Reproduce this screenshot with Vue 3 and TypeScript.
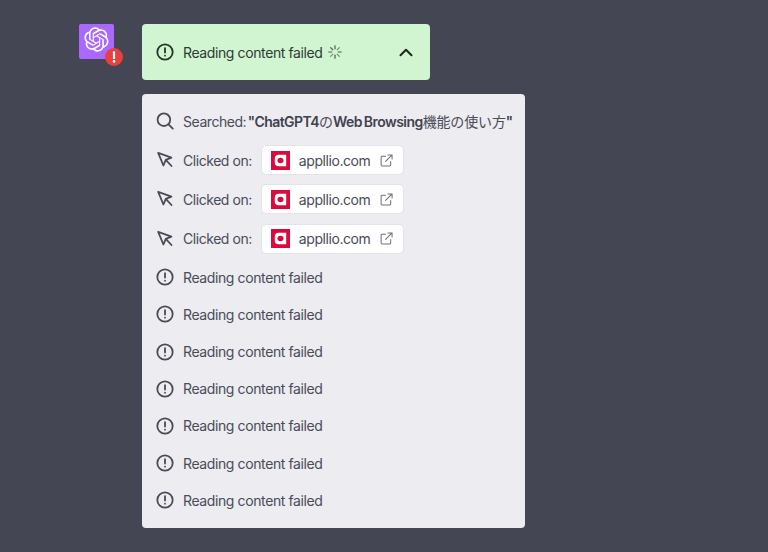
<script setup lang="ts">
const rowsFailed: number[] = [1, 2, 3, 4, 5, 6, 7]
const clicks: number[] = [1, 2, 3]
const spokes: number[] = [0, 45, 90, 135, 180, 225, 270, 315]
</script>

<template>
  <div class="page">
    <div class="avatar">
      <svg class="logo" viewBox="0 0 41 41" fill="#fff"><path d="M37.5324 16.8707C37.9808 15.5241 38.1363 14.0974 37.9886 12.6859C37.8409 11.2744 37.3934 9.91076 36.676 8.68622C35.6126 6.83404 33.9882 5.3676 32.0373 4.4985C30.0864 3.62941 27.9098 3.40259 25.8215 3.85078C24.8796 2.7893 23.7219 1.94125 22.4257 1.36341C21.1295 0.785575 19.7249 0.491269 18.3058 0.500197C16.1708 0.495044 14.0893 1.16803 12.3614 2.42214C10.6335 3.67624 9.34853 5.44666 8.6917 7.47815C7.30085 7.76286 5.98686 8.3414 4.8377 9.17505C3.68854 10.0087 2.73073 11.0782 2.02839 12.312C0.956464 14.1591 0.498905 16.2988 0.721698 18.4228C0.944492 20.5467 1.83612 22.5449 3.268 24.1293C2.81966 25.4759 2.66413 26.9026 2.81182 28.3141C2.95951 29.7256 3.40701 31.0892 4.12437 32.3138C5.18791 34.1659 6.8123 35.6322 8.76321 36.5013C10.7141 37.3704 12.8907 37.5973 14.9789 37.1492C15.9208 38.2107 17.0786 39.0587 18.3747 39.6366C19.6709 40.2144 21.0755 40.5087 22.4946 40.4998C24.6307 40.5054 26.7133 39.8321 28.4418 38.5772C30.1704 37.3223 31.4556 35.5506 32.1119 33.5179C33.5027 33.2332 34.8167 32.6547 35.9659 31.821C37.115 30.9874 38.0728 29.9178 38.7752 28.684C39.8458 26.8371 40.3023 24.6979 40.0789 22.5748C39.8556 20.4517 38.9639 18.4544 37.5324 16.8707ZM22.4978 37.8849C20.7443 37.8874 19.0459 37.2733 17.6994 36.1501C17.7601 36.117 17.8666 36.0586 17.936 36.0161L25.9004 31.4156C26.1003 31.3019 26.2663 31.137 26.3813 30.9378C26.4964 30.7386 26.5563 30.5124 26.5549 30.2825V19.0542L29.9213 20.998C29.9389 21.0068 29.9541 21.0198 29.9656 21.0359C29.977 21.052 29.9842 21.0707 29.9867 21.0902V30.3889C29.9842 32.375 29.1946 34.2791 27.7909 35.6841C26.3872 37.0892 24.4838 37.8806 22.4978 37.8849ZM6.39227 31.0064C5.51397 29.4888 5.19742 27.7107 5.49804 25.9832C5.55718 26.0187 5.66048 26.0818 5.73461 26.1244L13.699 30.7248C13.8975 30.8408 14.1233 30.902 14.3532 30.902C14.583 30.902 14.8088 30.8408 15.0073 30.7248L24.731 25.1103V28.9979C24.7321 29.0177 24.7283 29.0376 24.7199 29.0556C24.7115 29.0736 24.6988 29.0893 24.6829 29.1012L16.6317 33.7497C14.9096 34.7416 12.8643 35.0097 10.9447 34.4954C9.02506 33.9811 7.38785 32.7263 6.39227 31.0064ZM4.29707 13.6194C5.17156 12.0998 6.55279 10.9364 8.19885 10.3327C8.19885 10.4013 8.19491 10.5228 8.19491 10.6071V19.808C8.19351 20.0378 8.25334 20.2638 8.36823 20.4629C8.48312 20.6619 8.64893 20.8267 8.84863 20.9404L18.5723 26.5542L15.206 28.4979C15.1894 28.5089 15.1703 28.5155 15.1505 28.5173C15.1307 28.5191 15.1107 28.516 15.0924 28.5082L7.04046 23.8557C5.32135 22.8601 4.06716 21.2235 3.55289 19.3046C3.03862 17.3858 3.30624 15.3413 4.29707 13.6194ZM31.955 20.0556L22.2312 14.4411L25.5976 12.4981C25.6142 12.4872 25.6333 12.4805 25.6531 12.4787C25.6729 12.4769 25.6928 12.4801 25.7111 12.4879L33.7631 17.1364C34.9967 17.849 36.0017 18.8982 36.6606 20.1613C37.3194 21.4244 37.6047 22.849 37.4832 24.2684C37.3617 25.6878 36.8382 27.0432 35.9743 28.1759C35.1103 29.3086 33.9415 30.1717 32.6047 30.6641C32.6047 30.5947 32.6047 30.4733 32.6047 30.3889V21.188C32.6066 20.9586 32.5474 20.7328 32.4332 20.5338C32.319 20.3348 32.154 20.1698 31.955 20.0556ZM35.3055 15.0128C35.2464 14.9765 35.1431 14.9142 35.069 14.8717L27.1045 10.2712C26.906 10.1554 26.6803 10.0943 26.4504 10.0943C26.2206 10.0943 25.9948 10.1554 25.7963 10.2712L16.0726 15.8858V11.9982C16.0715 11.9783 16.0753 11.9585 16.0837 11.9405C16.0921 11.9225 16.1048 11.9068 16.1207 11.8949L24.1719 7.25025C25.4053 6.53903 26.8158 6.19376 28.2383 6.25482C29.6608 6.31589 31.0364 6.78077 32.2044 7.59508C33.3723 8.40939 34.2842 9.53945 34.8334 10.8531C35.3826 12.1667 35.5464 13.6095 35.3055 15.0128ZM14.2424 21.9419L10.8752 19.9981C10.8576 19.9893 10.8423 19.9763 10.8309 19.9602C10.8195 19.9441 10.8122 19.9254 10.8098 19.9058V10.6071C10.8107 9.18295 11.2173 7.78848 11.9819 6.58696C12.7466 5.38544 13.8377 4.42659 15.1275 3.82264C16.4173 3.21869 17.8524 2.99464 19.2649 3.1767C20.6775 3.35876 22.0089 3.93941 23.1034 4.85067C23.0427 4.88379 22.937 4.94215 22.8668 4.98473L14.9024 9.58517C14.7025 9.69878 14.5366 9.86356 14.4215 10.0626C14.3065 10.2616 14.2466 10.4877 14.2479 10.7175L14.2424 21.9419ZM16.071 17.9991L20.4018 15.4978L24.7325 17.9975V22.9985L20.4018 25.4983L16.071 22.9985V17.9991Z"/></svg>
      <span class="badge">
        <svg viewBox="0 0 18 18" width="18" height="18"><circle cx="9" cy="9" r="9" fill="#e8403f"/><path d="M9 4.200v6" stroke="#fff" stroke-width="2.200" stroke-linecap="round"/><circle cx="9" cy="13.400" r="1.300" fill="#fff"/></svg>
      </span>
    </div>

    <div class="col">
      <div class="status">
        <svg class="ic ic-dark" viewBox="0 0 18 18"><circle cx="9" cy="9" r="7.700"/><path d="M9 5.200v4.400M9 12.600v.1"/></svg>
        <span class="status-text">Reading content failed</span>
        <svg class="spin" viewBox="0 0 14 14">
          <path v-for="a in spokes" :key="a" d="M7 .8v3" :transform="`rotate(${a} 7 7)`" :opacity="a === 45 || a === 135 || a === 225 ? 0.65 : 1" />
        </svg>
        <svg class="chev" viewBox="0 0 14 9"><path d="M1.500 7.200 7 1.800l5.500 5.400"/></svg>
      </div>

      <div class="panel">
        <div class="row row-search">
          <svg class="ic" viewBox="0 0 18 18"><circle cx="7.900" cy="7.700" r="6.300"/><path d="m12.500 12.300 4.300 4.300"/></svg>
          <span class="query">Searched: <b>"ChatGPT4</b><span class="cjk">の</span><b>Web Browsing</b><span class="cjk">機能の使い方</span><b>"</b></span>
        </div>

        <div v-for="c in clicks" :key="c" class="row row-click">
          <svg class="ic" viewBox="0 0 18 18"><path d="M2.200 1.800 15.400 6.700 9.800 8.900 7.400 14.500Z"/><path d="m10 9.200 5.500 5.800"/></svg>
          <span class="clicked">Clicked on:</span>
          <span class="chip">
            <svg class="site" viewBox="0 0 20 20"><rect width="20" height="20" fill="#dc0a3c"/><path d="M8 4H16v12H8a4 4 0 0 1-4-4V8a4 4 0 0 1 4-4Z" fill="#fff"/><ellipse cx="10" cy="10" rx="3.200" ry="2.800" fill="#dc0a3c"/></svg>
            <span class="domain">appllio.com</span>
            <svg class="ext" viewBox="0 0 14 14"><path d="M6 2.500H2.200a1 1 0 0 0-1 1v8.300a1 1 0 0 0 1 1h8.300a1 1 0 0 0 1-1V8M8.500 1h4.500v4.500M13 1 6 8"/></svg>
          </span>
        </div>

        <div v-for="r in rowsFailed" :key="r" class="row row-fail">
          <svg class="ic" viewBox="0 0 18 18"><circle cx="9" cy="9" r="7.700"/><path d="M9 5.200v4.400M9 12.600v.1"/></svg>
          <span>Reading content failed</span>
        </div>
      </div>
    </div>
  </div>
</template>

<style>
html, body { margin: 0; background: #444654; }
</style>

<style scoped>
.page {
  width: 768px;
  height: 552px;
  box-sizing: border-box;
  padding: 24px 0 0 79px;
  display: flex;
  align-items: flex-start;
  gap: 28px;
  background: #444654;
  overflow: hidden;
  font-family: Inter, "Noto Sans CJK JP", sans-serif;
  font-size: 14px;
  letter-spacing: -0.39px;
  color: #4a4b57;
}
.avatar {
  position: relative;
  width: 35px;
  height: 35px;
  border-radius: 2px;
  background: #ab68ff;
  display: flex;
  align-items: center;
  justify-content: center;
}
.logo { width: 25px; height: 25px; margin: -4px 0 0 0; }
.badge { position: absolute; left: 26px; top: 24px; width: 18px; height: 18px; }
.badge svg { display: block; }
.col { display: flex; flex-direction: column; gap: 14px; align-items: flex-start; }
.status {
  width: 288px;
  height: 56px;
  box-sizing: border-box;
  padding: 0 17px 0 14px;
  display: flex;
  align-items: center;
  border-radius: 4px;
  background: #d1f5d1;
  color: #2f3a33;
}
.status-text { margin-left: 9px; }
.ic { width: 18px; height: 18px; flex: none; fill: none; stroke: #4a4b57; stroke-width: 1.800; stroke-linecap: round; stroke-linejoin: round; }
.ic-dark { stroke: #26332b; }
.spin { width: 14px; height: 14px; margin-left: 5px; fill: none; stroke: #4b5a50; stroke-width: 1.200; stroke-linecap: round; }
.chev { width: 14px; height: 9px; margin-left: auto; fill: none; stroke: #20261f; stroke-width: 2; stroke-linecap: round; stroke-linejoin: round; }
.panel {
  width: 383px;
  height: 434px;
  box-sizing: border-box;
  padding: 12px 0 0 14px;
  border-radius: 4px;
  background: #ececf1;
  display: flex;
  flex-direction: column;
}
.row { display: flex; align-items: center; gap: 9px; }
.row-search { height: 30px; margin-bottom: 9px; }
.query { letter-spacing: -0.45px; word-spacing: -2px; }
.row-search b { font-weight: 600; color: #41424e; letter-spacing: -0.55px; word-spacing: -1px; }
.cjk { font-weight: 400; letter-spacing: -0.15px; }
.row-click { height: 30px; margin-bottom: 9.300px; }
.clicked { letter-spacing: -0.45px; }
.chip {
  width: 143px;
  height: 30px;
  box-sizing: border-box;
  padding: 0 10px 0 9px;
  display: flex;
  align-items: center;
  border-radius: 5px;
  background: #fff;
  border: 1px solid #e3e3e8;
}
.site { width: 19px; height: 19px; flex: none; }
.domain { margin-left: 9px; letter-spacing: -0.42px; }
.ext { width: 13px; height: 13px; margin-left: auto; fill: none; stroke: #6f707a; stroke-width: 1.100; stroke-linecap: round; stroke-linejoin: round; }
.row-fail { height: 37.200px; }
.row-click + .row-fail { margin-top: -4.300px; }
</style>
